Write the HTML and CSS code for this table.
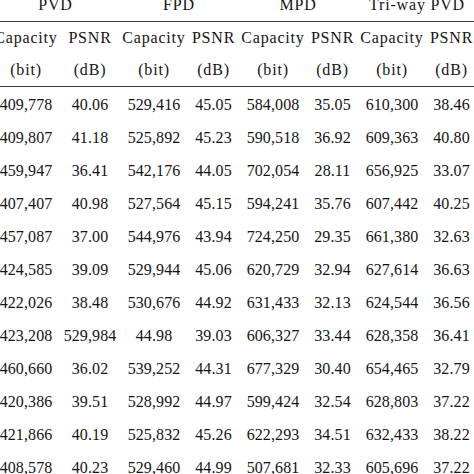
FILE: index.html
```html
<!DOCTYPE html>
<html>
<head>
<meta charset="utf-8">
<link rel="stylesheet" href="styles.css">
</head>
<body>
<div class="tbl">
  <div class="h1 span2">PVD</div>
  <div class="h1 span2">FPD</div>
  <div class="h1 span2">MPD</div>
  <div class="h1 span2">Tri-way PVD</div>
  <div class="rule"></div>

  <div class="h2">Capacity</div><div class="h2">PSNR</div>
  <div class="h2">Capacity</div><div class="h2">PSNR</div>
  <div class="h2">Capacity</div><div class="h2">PSNR</div>
  <div class="h2">Capacity</div><div class="h2">PSNR</div>

  <div class="h2">(bit)</div><div class="h2">(dB)</div>
  <div class="h2">(bit)</div><div class="h2">(dB)</div>
  <div class="h2">(bit)</div><div class="h2">(dB)</div>
  <div class="h2">(bit)</div><div class="h2">(dB)</div>
  <div class="rule rule-gap"></div>

  <div class="d">409,778</div><div class="d">40.06</div><div class="d">529,416</div><div class="d">45.05</div><div class="d">584,008</div><div class="d">35.05</div><div class="d">610,300</div><div class="d">38.46</div>
  <div class="d">409,807</div><div class="d">41.18</div><div class="d">525,892</div><div class="d">45.23</div><div class="d">590,518</div><div class="d">36.92</div><div class="d">609,363</div><div class="d">40.80</div>
  <div class="d">459,947</div><div class="d">36.41</div><div class="d">542,176</div><div class="d">44.05</div><div class="d">702,054</div><div class="d">28.11</div><div class="d">656,925</div><div class="d">33.07</div>
  <div class="d">407,407</div><div class="d">40.98</div><div class="d">527,564</div><div class="d">45.15</div><div class="d">594,241</div><div class="d">35.76</div><div class="d">607,442</div><div class="d">40.25</div>
  <div class="d">457,087</div><div class="d">37.00</div><div class="d">544,976</div><div class="d">43.94</div><div class="d">724,250</div><div class="d">29.35</div><div class="d">661,380</div><div class="d">32.63</div>
  <div class="d">424,585</div><div class="d">39.09</div><div class="d">529,944</div><div class="d">45.06</div><div class="d">620,729</div><div class="d">32.94</div><div class="d">627,614</div><div class="d">36.63</div>
  <div class="d">422,026</div><div class="d">38.48</div><div class="d">530,676</div><div class="d">44.92</div><div class="d">631,433</div><div class="d">32.13</div><div class="d">624,544</div><div class="d">36.56</div>
  <div class="d">423,208</div><div class="d">529,984</div><div class="d">44.98</div><div class="d">39.03</div><div class="d">606,327</div><div class="d">33.44</div><div class="d">628,358</div><div class="d">36.41</div>
  <div class="d">460,660</div><div class="d">36.02</div><div class="d">539,252</div><div class="d">44.31</div><div class="d">677,329</div><div class="d">30.40</div><div class="d">654,465</div><div class="d">32.79</div>
  <div class="d">420,386</div><div class="d">39.51</div><div class="d">528,992</div><div class="d">44.97</div><div class="d">599,424</div><div class="d">32.54</div><div class="d">628,803</div><div class="d">37.22</div>
  <div class="d">421,866</div><div class="d">40.19</div><div class="d">525,832</div><div class="d">45.26</div><div class="d">622,293</div><div class="d">34.51</div><div class="d">632,433</div><div class="d">38.22</div>
  <div class="d">408,578</div><div class="d">40.23</div><div class="d">529,460</div><div class="d">44.99</div><div class="d">507,681</div><div class="d">32.33</div><div class="d">605,696</div><div class="d">37.22</div>
</div>
</body>
</html>
```
FILE: styles.css
```css
html, body {
  margin: 0;
  padding: 0;
  background: #ffffff;
  overflow: hidden;
  width: 474px;
  height: 474px;
}
.tbl {
  display: grid;
  grid-template-columns: 69px 59px 69px 50px 69px 50px 69px 50px;
  margin-left: -8.5px;
  margin-top: -11px;
  font-family: "Liberation Serif", "Times New Roman", serif;
  font-size: 16px;
  color: #141414;
  white-space: nowrap;
}
.tbl > div {
  text-align: center;
}
.span2 {
  grid-column: span 2;
}
.h1 {
  line-height: 32px;
  height: 32px;
  letter-spacing: 0.8px;
}
.h2 {
  line-height: 32px;
  height: 32px;
  letter-spacing: 0.8px;
}
.d {
  line-height: 33px;
  height: 33px;
  letter-spacing: 0.1px;
}
.rule {
  grid-column: 1 / -1;
  height: 1px;
  background: #3c3c3c;
}
.rule-gap {
  margin-bottom: 1px;
}
```
